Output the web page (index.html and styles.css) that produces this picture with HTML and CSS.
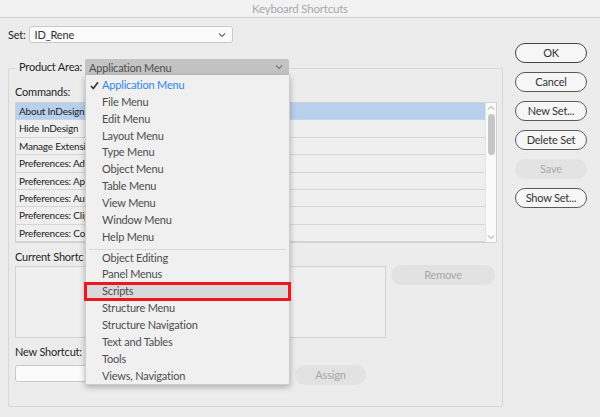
FILE: index.html
```html
<!DOCTYPE html>
<html>
<head>
<meta charset="utf-8">
<link rel="stylesheet" href="styles.css">
</head>
<body>
<div class="titlebar">Keyboard Shortcuts</div>
<div class="dialog">
  <div class="main">
    <div class="set-row">
      <span class="lbl">Set:</span>
      <div class="select">
        <span>ID_Rene</span>
        <svg class="chev" width="8" height="6" viewBox="0 0 8 6"><path d="M1 1.5 L4 4.5 L7 1.5" fill="none" stroke="#666" stroke-width="1.1"/></svg>
      </div>
    </div>
    <div class="group">
      <div class="legend">
        <span class="lbl">Product Area:</span>
        <div class="dropdown">
          <span>Application Menu</span>
          <svg class="chev" width="8" height="6" viewBox="0 0 8 6"><path d="M1 1.5 L4 4.5 L7 1.5" fill="none" stroke="#777" stroke-width="1.1"/></svg>
          <div class="menu">
            <div class="item checked"><svg class="check" width="9" height="9" viewBox="0 0 9 9"><path d="M1 5 L3.3 7.5 L8 1.2" fill="none" stroke="#333" stroke-width="1.6"/></svg>Application Menu</div>
            <div class="item">File Menu</div>
            <div class="item">Edit Menu</div>
            <div class="item">Layout Menu</div>
            <div class="item">Type Menu</div>
            <div class="item">Object Menu</div>
            <div class="item">Table Menu</div>
            <div class="item">View Menu</div>
            <div class="item">Window Menu</div>
            <div class="item">Help Menu</div>
            <div class="sep"></div>
            <div class="item">Object Editing</div>
            <div class="item">Panel Menus</div>
            <div class="item marked">Scripts</div>
            <div class="item">Structure Menu</div>
            <div class="item">Structure Navigation</div>
            <div class="item">Text and Tables</div>
            <div class="item">Tools</div>
            <div class="item">Views, Navigation</div>
          </div>
        </div>
      </div>
      <div class="section-lbl first">Commands:</div>
      <div class="list">
        <div class="rows">
          <div class="row selected"><span class="cell">About InDesign...</span></div>
          <div class="row"><span class="cell">Hide InDesign</span></div>
          <div class="row"><span class="cell">Manage Extensions...</span></div>
          <div class="row"><span class="cell">Preferences: Advanced Type...</span></div>
          <div class="row"><span class="cell">Preferences: Appearance of Black...</span></div>
          <div class="row"><span class="cell">Preferences: Autocorrect...</span></div>
          <div class="row"><span class="cell">Preferences: Clipboard Handling...</span></div>
          <div class="row"><span class="cell">Preferences: Composition...</span></div>
        </div>
        <div class="scrollbar">
          <svg class="arrow" width="8" height="6" viewBox="0 0 8 6"><path d="M1 4.5 L4 1.5 L7 4.5" fill="none" stroke="#999" stroke-width="1"/></svg>
          <div class="thumb"></div>
          <div class="spacer"></div>
          <svg class="arrow" width="8" height="6" viewBox="0 0 8 6"><path d="M1 1.5 L4 4.5 L7 1.5" fill="none" stroke="#999" stroke-width="1"/></svg>
        </div>
      </div>
      <div class="section-lbl"><span class="cut">Current Shortcuts:</span></div>
      <div class="shortcut-row">
        <div class="shortcut-box"></div>
        <div class="pill remove">Remove</div>
      </div>
      <div class="section-lbl">New Shortcut:</div>
      <div class="new-row">
        <div class="input"></div>
        <div class="pill assign">Assign</div>
      </div>
    </div>
  </div>
  <div class="side">
    <div class="btn default">OK</div>
    <div class="btn">Cancel</div>
    <div class="btn">New Set...</div>
    <div class="btn">Delete Set</div>
    <div class="btn disabled">Save</div>
    <div class="btn">Show Set...</div>
  </div>
</div>
</body>
</html>
```

FILE: styles.css
```css
* { box-sizing: border-box; }
html, body {
  margin: 0;
  padding: 0;
  width: 600px;
  height: 417px;
  overflow: hidden;
  background: #ececec;
  font-family: "Lato", "Liberation Sans", sans-serif;
  font-size: 11px;
  letter-spacing: -0.2px;
  color: #262626;
}
.titlebar {
  height: 18px;
  line-height: 17px;
  text-align: center;
  color: #a9a9a9;
  font-size: 11.5px;
  background: #f2f2f2;
  border-bottom: 1px solid #d2d2d2;
}
.dialog {
  display: flex;
  padding: 0 13px 0 8px;
}
.main {
  width: 495px;
}
.set-row {
  display: flex;
  align-items: center;
  margin-top: 8px;
  height: 17px;
}
.lbl {
  color: #262626;
  line-height: 16px;
}
.select {
  margin-left: 3px;
  width: 204px;
  height: 17px;
  background: #fbfbfb;
  border: 1px solid #c9c9c9;
  border-radius: 3px;
  display: flex;
  align-items: center;
  justify-content: space-between;
  padding: 0 6px 0 5px;
  color: #333;
}
.group {
  margin-top: 25px;
  height: 339px;
  border: 1px solid #d7d7d7;
  border-radius: 2px;
  padding: 0 5px 0 6px;
}
.legend {
  margin-top: -10px;
  display: flex;
  align-items: center;
  height: 16px;
  width: fit-content;
  background: #ececec;
  padding: 0 0 0 4px;
}
.dropdown {
  position: relative;
  margin-left: 3px;
  width: 204px;
  height: 16px;
  background: #c3c3c3;
  border-radius: 2px 2px 0 0;
  display: flex;
  align-items: center;
  justify-content: space-between;
  padding: 0 6px 0 4px;
  color: #4f4f4f;
}
.menu {
  position: absolute;
  left: 0;
  top: 16px;
  width: 205px;
  padding-top: 2px;
  background: #f0f0f0;
  border: 1px solid #cdcdcd;
  border-top: none;
  box-shadow: 0 2px 6px rgba(0, 0, 0, 0.28);
  z-index: 10;
}
.item {
  position: relative;
  height: 16.85px;
  line-height: 16.85px;
  padding-left: 16px;
  color: #4d4d4d;
  white-space: nowrap;
}
.item.checked { color: #2f86e8; }
.check {
  position: absolute;
  left: 4px;
  top: 4px;
}
.sep {
  height: 4.2px;
  margin: 0 3px;
  border-bottom: 1px solid #dadada;
}
.item.marked {
  background: #d9d9d9;
  outline: 3px solid #f0161d;
  outline-offset: -2px;
  margin: 0 -1px;
  padding-left: 17px;
}
.section-lbl {
  margin-top: 7px;
  height: 14px;
  line-height: 14px;
  white-space: nowrap;
}
.section-lbl.first { margin-top: 10px; }
.cut {
  display: inline-block;
  max-width: 69px;
  overflow: hidden;
  vertical-align: top;
}
.list {
  margin-top: 3px;
  height: 141px;
  border: 1px solid #d2d2d2;
  display: flex;
  background: #efefef;
}
.rows { flex: 1; }
.row {
  height: 17.4px;
  line-height: 17px;
  padding-left: 3px;
  font-size: 10px;
  color: #222;
  border-bottom: 1px solid #d6d6d6;
  white-space: nowrap;
  overflow: hidden;
}
.cell {
  display: inline-block;
  max-width: 66px;
  overflow: hidden;
  vertical-align: top;
}
.row.selected {
  background: #b8d0ec;
  border-bottom-color: #c3d6ec;
}
.scrollbar {
  width: 11px;
  background: #fafafa;
  border-left: 1px solid #e4e4e4;
  display: flex;
  flex-direction: column;
  align-items: center;
  padding: 2px 0 2px;
}
.thumb {
  margin-top: 3px;
  width: 7px;
  height: 41px;
  border-radius: 4px;
  background: #c5c5c5;
}
.spacer { flex: 1; }
.shortcut-row {
  margin-top: 2px;
  display: flex;
  align-items: flex-start;
}
.shortcut-box {
  width: 371px;
  height: 72px;
  border: 1px solid #d2d2d2;
  background: #efefef;
}
.pill {
  border-radius: 11px;
  background: #e2e2e2;
  color: #a7a7a7;
  text-align: center;
}
.remove {
  margin-left: 5px;
  margin-top: -1px;
  width: 104px;
  height: 20px;
  line-height: 20px;
}
.new-row {
  margin-top: 6px;
  display: flex;
  align-items: flex-start;
}
.input {
  width: 275px;
  height: 17px;
  background: #fbfbfb;
  border: 1px solid #c9c9c9;
  border-radius: 3px;
}
.assign {
  margin-left: 5px;
  width: 71px;
  height: 20px;
  line-height: 20px;
}
.side {
  margin-left: 12px;
  margin-top: 25px;
  display: flex;
  flex-direction: column;
  gap: 9px;
  width: 72px;
}
.btn {
  height: 20px;
  line-height: 18px;
  border: 1px solid #5a5a5a;
  border-radius: 10px;
  background: #f6f6f6;
  text-align: center;
  color: #333;
}
.btn.default {
  border: 1.6px solid #444;
  line-height: 17px;
}
.btn.disabled {
  border-color: transparent;
  background: #e3e3e3;
  color: #ababab;
}
```
